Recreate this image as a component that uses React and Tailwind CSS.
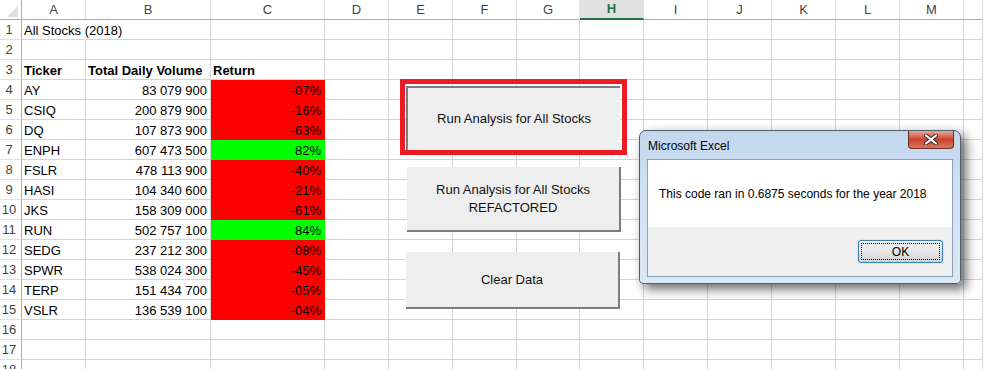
import React from 'react';

// column letters with their widths (right gridline included)
const columns = [
  { name: 'A', w: 'w-[64px]' },
  { name: 'B', w: 'w-[125px]' },
  { name: 'C', w: 'w-[114px]' },
  { name: 'D', w: 'w-[64px]' },
  { name: 'E', w: 'w-[64px]' },
  { name: 'F', w: 'w-[64px]' },
  { name: 'G', w: 'w-[63px]' },
  { name: 'H', w: 'w-[64px]' },
  { name: 'I', w: 'w-[64px]' },
  { name: 'J', w: 'w-[64px]' },
  { name: 'K', w: 'w-[64px]' },
  { name: 'L', w: 'w-[64px]' },
  { name: 'M', w: 'w-[64px]' },
  { name: 'N', w: 'w-[19px]', hidden: true },
];

const stocks = [
  ['AY', '83 079 900', '-07%', false],
  ['CSIQ', '200 879 900', '-16%', false],
  ['DQ', '107 873 900', '-63%', false],
  ['ENPH', '607 473 500', '82%', true],
  ['FSLR', '478 113 900', '-40%', false],
  ['HASI', '104 340 600', '-21%', false],
  ['JKS', '158 309 000', '-61%', false],
  ['RUN', '502 757 100', '84%', true],
  ['SEDG', '237 212 300', '-08%', false],
  ['SPWR', '538 024 300', '-45%', false],
  ['TERP', '151 434 700', '-05%', false],
  ['VSLR', '136 539 100', '-04%', false],
];

const rows = [
  { n: 1, cells: { A: { text: 'All Stocks (2018)', overflow: true } } },
  { n: 2, cells: {} },
  {
    n: 3,
    cells: {
      A: { text: 'Ticker', bold: true },
      B: { text: 'Total Daily Volume', bold: true },
      C: { text: 'Return', bold: true },
    },
  },
  ...stocks.map(([t, vol, ret, up], i) => ({
    n: i + 4,
    cells: {
      A: { text: t },
      B: { text: vol, right: true },
      C: { text: ret, right: true, fill: up ? 'green' : 'red' },
    },
  })),
  { n: 16, cells: {} },
  { n: 17, cells: {} },
  { n: 18, cells: {} },
];

const HeaderRow = () => (
  <div className="flex h-[20px]">
    <div className="relative w-[22px] h-[20px] shrink-0 border-r border-b border-[#ababab] bg-white">
      <svg className="absolute left-0 top-0" width="21" height="19" viewBox="0 0 21 19">
        <polygon points="7,17 18,6 18,17" fill="#dfdfdf" />
      </svg>
    </div>
    {columns.map((c) => (
      <div
        key={c.name}
        className={`${c.w} shrink-0 h-[20px] flex items-center justify-center border-r border-r-[#e1e1e1] ${
          c.name === 'H'
            ? 'bg-[#e1e1e1] border-b-2 border-b-[#217346] text-[#217346] font-bold'
            : 'bg-white border-b border-b-[#ababab] text-[#444]'
        }`}
      >
        {c.hidden ? '' : c.name}
      </div>
    ))}
  </div>
);

const Cell = ({ col, cell }) => {
  let tone = 'border-[#d4d4d4]';
  if (cell && cell.fill === 'red') tone = 'bg-[#ff0000] border-[#ff0000]';
  if (cell && cell.fill === 'green') tone = 'bg-[#00ff00] border-[#00ff00]';
  const noRight = cell && cell.overflow ? 'border-r-white' : '';
  return (
    <div
      className={`${col.w} shrink-0 h-[20px] border-r border-b ${tone} ${noRight} flex items-center pt-[2px] ${
        cell && cell.right ? 'justify-end pr-[3px]' : 'pl-[2px]'
      } ${cell && cell.bold ? 'font-bold' : ''} whitespace-nowrap overflow-visible text-black`}
    >
      {cell ? cell.text : ''}
    </div>
  );
};

const SheetButton = ({ className, children }) => (
  <div
    className={`absolute flex flex-col items-center justify-center bg-[#eeeeee] text-[13px] leading-[18px] text-[#111] ${className}`}
  >
    {children}
  </div>
);

const MessageBox = () => (
  <div className="absolute left-[639px] top-[130px] w-[322px] h-[154px] rounded-t-[7px] rounded-b-[4px] border border-[#4d5d70] bg-gradient-to-b from-[#c2d7ee] via-[#d3e3f4] to-[#dbe8f6] shadow-[5px_5px_12px_rgba(0,0,0,0.6)] px-[7px] font-['Liberation_Sans',Arial,sans-serif]">
    <div className="h-[28px] flex items-center pl-[1px] pt-[1px] text-[12px] text-black">Microsoft Excel</div>
    {/* close button */}
    <div className="absolute right-[6px] top-0 w-[46px] h-[18px] rounded-b-[4px] border border-t-0 border-[#6e2d22] bg-gradient-to-b from-[#e8a795] via-[#c8432b] to-[#d9745c] flex items-center justify-center">
      <svg width="14" height="11" viewBox="0 0 14 11">
        <path d="M2 1.5 L12 9.5 M12 1.5 L2 9.5" stroke="#3b2a26" strokeWidth="4" strokeLinecap="round" />
        <path d="M2 1.5 L12 9.5 M12 1.5 L2 9.5" stroke="#ffffff" strokeWidth="2.2" strokeLinecap="round" />
      </svg>
    </div>
    <div className="h-[118px] border border-[#8ba2bd] flex flex-col">
      <div className="h-[67px] bg-white flex items-center pl-[11px] text-[12px] text-black">
        This code ran in 0.6875 seconds for the year 2018
      </div>
      <div className="flex-1 bg-[#f0f0f0] flex justify-end items-start pt-[13px] pr-[9px]">
        <div className="w-[85px] h-[23px] rounded-[3px] border border-[#3c7fb1] bg-gradient-to-b from-[#f3f3f3] via-[#e6e6e6] to-[#d3d3d3] p-[2px] shadow-[0_0_2px_#7fd3f7]">
          <div className="w-full h-full border border-dotted border-black flex items-center justify-center text-[12px] text-black">
            OK
          </div>
        </div>
      </div>
    </div>
  </div>
);

export default function App() {
  return (
    <div className="relative w-[983px] h-[369px] overflow-hidden bg-white font-['Liberation_Sans',Arial,sans-serif] text-[13px]">
      <HeaderRow />
      {rows.map((r) => (
        <div key={r.n} className="flex h-[20px]">
          <div className="w-[22px] shrink-0 h-[20px] border-r border-r-[#ababab] border-b border-b-[#e1e1e1] flex items-center justify-center pr-[3px] pt-[1px] text-[#444]">
            {r.n}
          </div>
          {columns.map((c) => (
            <Cell key={c.name} col={c} cell={r.cells[c.name]} />
          ))}
        </div>
      ))}

      {/* sheet buttons */}
      <div className="absolute left-[400px] top-[79px] w-[227px] h-[76px] border-[5px] border-[#ed1c24]" />
      <SheetButton className="left-[406px] top-[86px] w-[214px] h-[64px] border-t-2 border-l-2 border-[#7d7d7d]">
        Run Analysis for All Stocks
      </SheetButton>
      <SheetButton className="left-[407px] top-[167px] w-[214px] h-[65px] border-r-2 border-b-2 border-[#7d7d7d]">
        <span>Run Analysis for All Stocks</span>
        <span>REFACTORED</span>
      </SheetButton>
      <SheetButton className="left-[406px] top-[252px] w-[214px] h-[57px] border-r-2 border-b-2 border-[#7d7d7d]">
        Clear Data
      </SheetButton>

      <MessageBox />
    </div>
  );
}
